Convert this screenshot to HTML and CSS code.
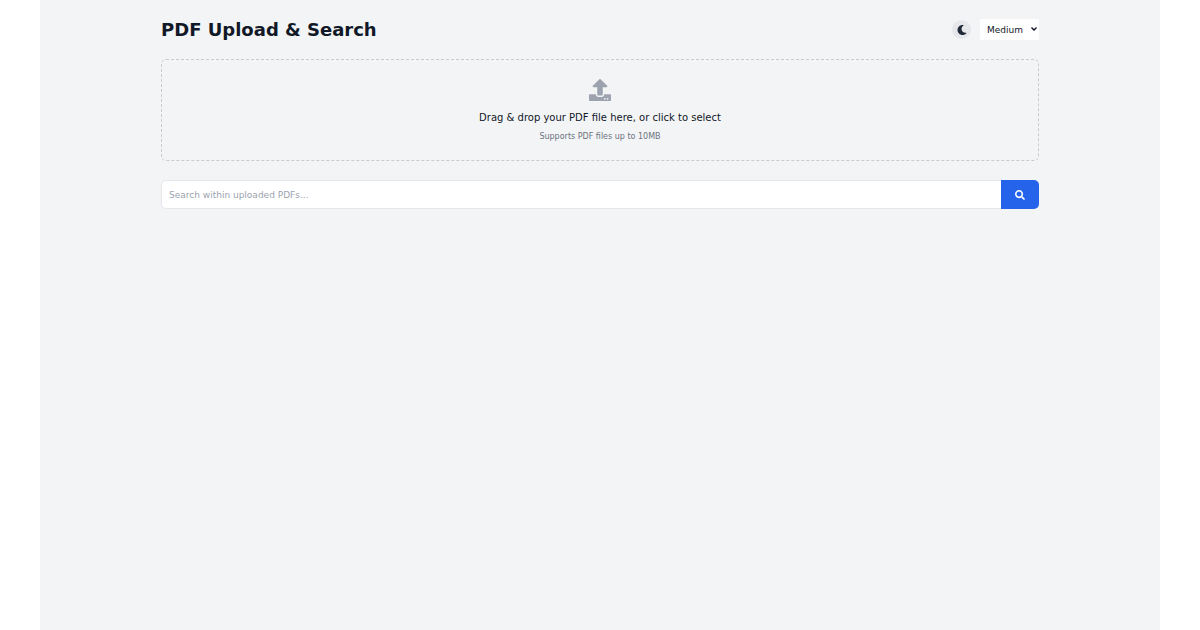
FILE: index.html
```html
<!DOCTYPE html>
<html lang="en">

<head>
	<meta charset="UTF-8">
	<meta name="viewport" content="width=device-width, initial-scale=1.0">
	<title>PDF Upload &amp; Search</title>
	<link rel="stylesheet" href="styles.css">
</head>

<body>
	<div class="page">
		<div class="container">
			<header class="header">
				<h1>PDF Upload &amp; Search</h1>
				<div class="controls">
					<button type="button" class="theme-toggle" aria-label="Toggle dark mode">
						<svg class="icon-moon" viewBox="0 0 512 512" fill="currentColor"><path d="M283.211 512c78.962 0 151.079-35.925 198.857-94.792 7.068-8.708-.639-21.430-11.562-19.350-124.203 23.654-238.262-71.576-238.262-196.954 0-72.222 38.662-138.635 101.498-174.394 9.686-5.512 7.250-20.197-3.756-22.230A258.156 258.156 0 0 0 283.211 0c-141.309 0-256 114.511-256 256 0 141.309 114.511 256 256 256z"/></svg>
					</button>
					<div class="select-box">
						<select class="font-size" aria-label="Font size">
							<option>Small</option>
							<option selected>Medium</option>
							<option>Large</option>
						</select>
						<svg class="icon-arrow" viewBox="0 0 6 4" fill="none" stroke="currentColor" stroke-width="1.4"><path d="M.5.6L3 3.100 5.500.6"/></svg>
					</div>
				</div>
			</header>

			<button type="button" class="drop-zone">
				<svg class="icon-upload" viewBox="0 0 512 512" fill="currentColor"><path d="M296 384h-80c-13.300 0-24-10.700-24-24V192h-87.700c-17.800 0-26.700-21.500-14.100-34.100L242.300 5.700c7.500-7.500 19.800-7.500 27.300 0l152.200 152.200c12.600 12.600 3.700 34.100-14.100 34.100H320v168c0 13.300-10.700 24-24 24zm216-8v112c0 13.300-10.700 24-24 24H24c-13.300 0-24-10.700-24-24V376c0-13.300 10.700-24 24-24h136v8c0 30.900 25.100 56 56 56h80c30.900 0 56-25.100 56-56v-8h136c13.300 0 24 10.700 24 24zm-124 88c0-11-9-20-20-20s-20 9-20 20 9 20 20 20 20-9 20-20zm64 0c0-11-9-20-20-20s-20 9-20 20 9 20 20 20 20-9 20-20z"/></svg>
				<span class="drop-title">Drag &amp; drop your PDF file here, or click to select</span>
				<span class="drop-hint">Supports PDF files up to 10MB</span>
			</button>

			<form class="search">
				<input type="text" placeholder="Search within uploaded PDFs..." aria-label="Search within uploaded PDFs">
				<button type="submit" aria-label="Search">
					<svg class="icon-search" viewBox="0 0 512 512" fill="currentColor"><path d="M505 442.700L405.300 343c-4.500-4.500-10.600-7-17-7H372c27.600-35.300 44-79.700 44-128C416 93.100 322.900 0 208 0S0 93.100 0 208s93.100 208 208 208c48.300 0 92.700-16.400 128-44v16.300c0 6.400 2.500 12.500 7 17l99.700 99.700c9.400 9.400 24.600 9.400 33.900 0l28.300-28.300c9.400-9.400 9.400-24.600.1-34zM208 336c-70.700 0-128-57.200-128-128 0-70.700 57.200-128 128-128 70.700 0 128 57.200 128 128 0 70.700-57.200 128-128 128z"/></svg>
				</button>
			</form>
		</div>
	</div>
</body>

</html>
```

FILE: styles.css
```css
* {
	box-sizing: border-box;
}

body {
	margin: 0;
	background-color: white;
	color: #111827;
	font-family: "DejaVu Sans", sans-serif;
}

button,
input,
select {
	font-family: inherit;
	border: none;
}

button {
	cursor: pointer;
}

.page {
	min-height: 100vh;
	margin: 0 40px;
	padding: 19px 16px;
	background-color: #f3f4f6;
}

.container {
	max-width: 878px;
	margin: 0 auto;
}

.header {
	display: flex;
	align-items: center;
	justify-content: space-between;
	margin-bottom: 19px;
}

h1 {
	margin: 0;
	font-size: 18px;
	line-height: 21px;
}

.controls {
	display: flex;
	align-items: center;
	gap: 9px;
}

.theme-toggle {
	display: flex;
	align-items: center;
	justify-content: center;
	width: 19px;
	height: 19px;
	padding: 0;
	border-radius: 50%;
	background-color: #e5e7eb;
	color: #1f2937;
}

.icon-moon {
	height: 10px;
}

.select-box {
	position: relative;
}

.font-size {
	appearance: none;
	display: block;
	height: 21px;
	padding: 0 16px 0 7px;
	border-radius: 2px;
	background-color: white;
	color: #111827;
	font-size: 9px;
}

.icon-arrow {
	position: absolute;
	top: 8px;
	right: 2px;
	width: 6px;
	pointer-events: none;
}

.drop-zone {
	display: flex;
	flex-direction: column;
	align-items: center;
	width: 100%;
	margin-bottom: 19px;
	padding: 19px 19px 17px;
	border: 1px dashed #c8ccd2;
	border-radius: 5px;
	background-color: transparent;
}

.icon-upload {
	height: 22px;
	margin-bottom: 9px;
	color: #9ca3af;
}

.drop-title {
	margin-bottom: 5px;
	color: #111827;
	font-size: 10px;
	line-height: 16px;
}

.drop-hint {
	color: #6b7280;
	font-size: 8px;
	line-height: 12px;
}

.search {
	display: flex;
}

.search input {
	flex: 1;
	min-width: 0;
	height: 29px;
	padding: 0 7px;
	border: 1px solid #e5e7eb;
	border-right: none;
	border-radius: 5px 0 0 5px;
	background-color: white;
	color: #111827;
	font-size: 9px;
}

.search input::placeholder {
	color: #9ca3af;
}

.search button {
	display: flex;
	align-items: center;
	justify-content: center;
	width: 38px;
	padding: 0;
	border-radius: 0 5px 5px 0;
	background-color: #2563eb;
	color: white;
}

.icon-search {
	height: 10px;
}
```
